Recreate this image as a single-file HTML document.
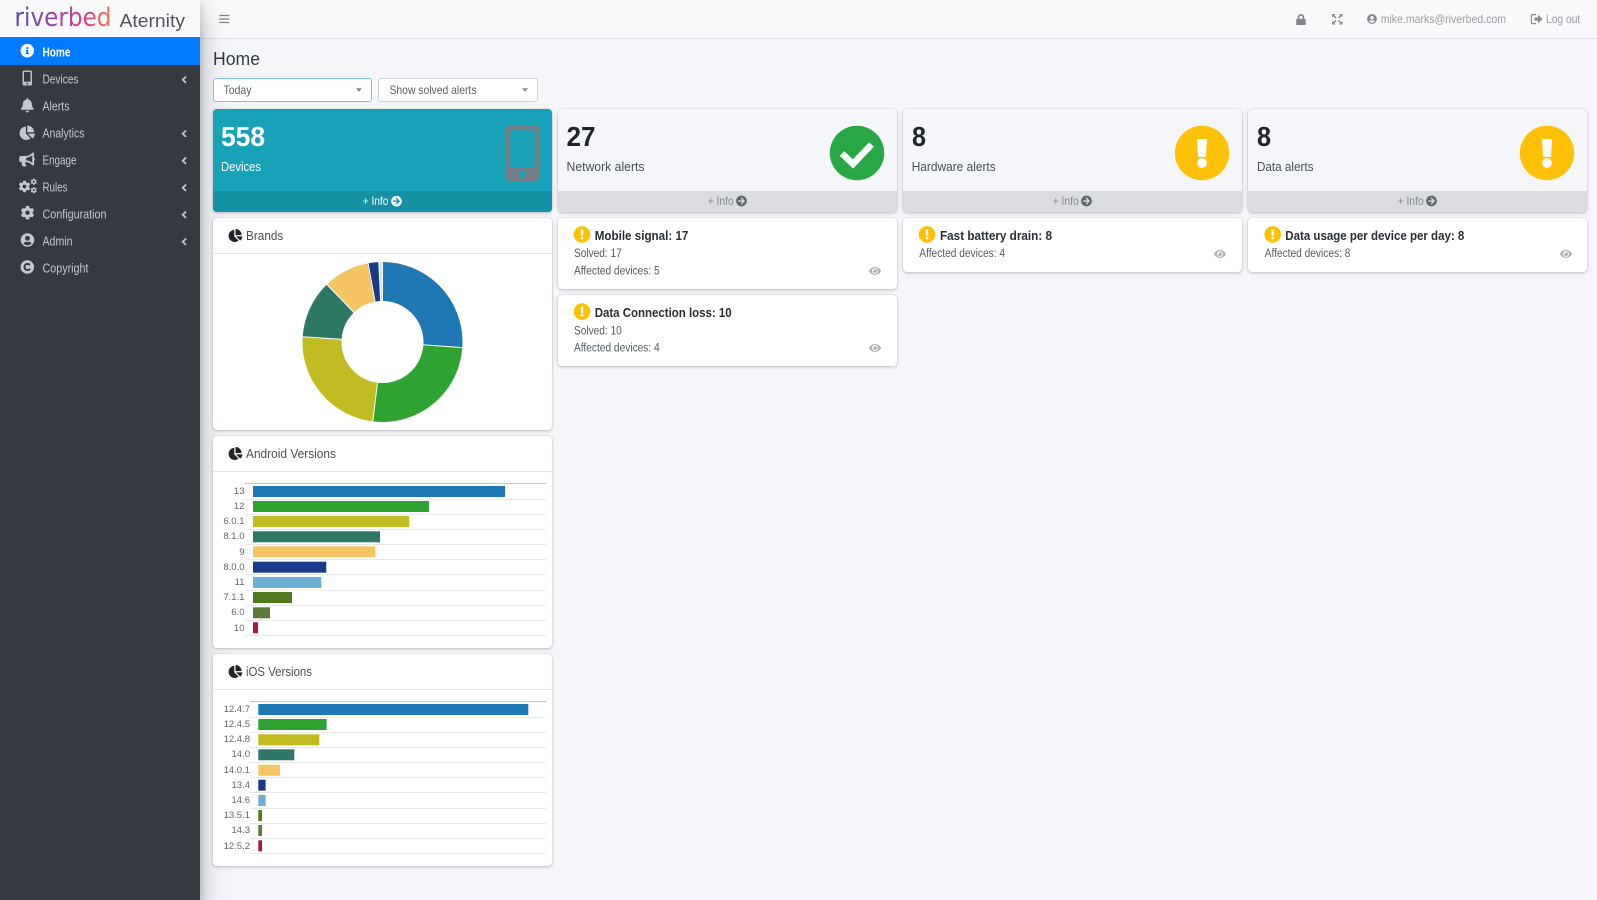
<!DOCTYPE html>
<html lang="en"><head><meta charset="utf-8"><title>Home</title>
<style>
html,body{margin:0;padding:0;width:1597px;height:900px;overflow:hidden;background:#f4f6f9;font-family:"Liberation Sans",sans-serif}
.b{position:absolute;box-sizing:border-box}
.c{border-radius:4px;box-shadow:0 0 1px rgba(0,0,0,.18),0 1px 3px rgba(0,0,0,.22)}
.w{background:#fff}.f{background:#dadce0;border-radius:0 0 4px 4px}
svg.o{position:absolute;left:0;top:0}
text{font-family:"Liberation Sans",sans-serif}
.s{font-size:12.5px;fill:#c2c7d0}
.l{font-size:13px;fill:#4a5056}
.n{font-size:28px;font-weight:700;fill:#212529}
.h{font-size:13px;font-weight:700;fill:#2b2f33}
.p{font-size:11.5px;fill:#555b61}
.g{font-size:12px;fill:#9a9ea3}
.i{font-size:12px;fill:#858a8f}
.a{font-size:9.5px;fill:#666;text-anchor:end}
</style></head><body>
<div class="b" style="left:200px;top:0;width:1397px;height:39px;background:#f8f9fa;border-bottom:1px solid #dee2e6"></div>
<div class="b" style="left:0;top:0;width:200px;height:900px;background:#343a40;box-shadow:0 14px 28px rgba(0,0,0,.25),0 4px 10px rgba(0,0,0,.2)"></div>
<div class="b" style="left:0;top:0;width:200px;height:37px;background:#f8f9fa"></div>
<div class="b" style="left:0;top:37px;width:200px;height:28px;background:#007bff"></div>
<div class="b" style="left:213px;top:78px;width:159px;height:24px;background:#fff;border:1px solid #80bdff;border-radius:3px"></div>
<div class="b" style="left:378px;top:78px;width:160px;height:24px;background:#fff;border:1px solid #ced4da;border-radius:3px"></div>
<div class="b c" style="left:213px;top:109px;width:339px;height:103px;background:#17a2b8"></div>
<div class="b" style="left:213px;top:191px;width:339px;height:21px;background:#1591a5;border-radius:0 0 4px 4px"></div>
<div class="b c" style="left:558px;top:109px;width:339px;height:103px"></div><div class="b f" style="left:558px;top:191px;width:339px;height:21px"></div>
<div class="b c" style="left:903px;top:109px;width:339px;height:103px"></div><div class="b f" style="left:903px;top:191px;width:339px;height:21px"></div>
<div class="b c" style="left:1248px;top:109px;width:339px;height:103px"></div><div class="b f" style="left:1248px;top:191px;width:339px;height:21px"></div>
<div class="b c w" style="left:558px;top:218px;width:339px;height:71px"></div>
<div class="b c w" style="left:558px;top:295px;width:339px;height:71px"></div>
<div class="b c w" style="left:903px;top:218px;width:339px;height:54px"></div>
<div class="b c w" style="left:1248px;top:218px;width:339px;height:54px"></div>
<div class="b c w" style="left:213px;top:218px;width:339px;height:212px"></div>
<div class="b c w" style="left:213px;top:436px;width:339px;height:212px"></div>
<div class="b c w" style="left:213px;top:654px;width:339px;height:212px"></div>
<div class="b" style="left:213px;top:253px;width:339px;height:1px;background:#e3e5e8"></div>
<div class="b" style="left:213px;top:471px;width:339px;height:1px;background:#e3e5e8"></div>
<div class="b" style="left:213px;top:689px;width:339px;height:1px;background:#e3e5e8"></div>

<svg class="o" width="1597" height="900" viewBox="0 0 1597 900" xmlns="http://www.w3.org/2000/svg">
<defs>
<linearGradient id="lg" gradientUnits="userSpaceOnUse" x1="15" y1="0" x2="112" y2="0"><stop offset="0" stop-color="#5b4a9e"/><stop offset=".4" stop-color="#9a48a8"/><stop offset=".72" stop-color="#d8408e"/><stop offset="1" stop-color="#f0814e"/></linearGradient>
<symbol id="info" viewBox="0 0 512 512"><path fill-rule="evenodd" d="M256 8C119.043 8 8 119.083 8 256c0 136.997 111.043 248 248 248s248-111.003 248-248C504 119.083 392.957 8 256 8zm0 110c23.196 0 42 18.804 42 42s-18.804 42-42 42-42-18.804-42-42 18.804-42 42-42zm56 254c0 6.627-5.373 12-12 12h-88c-6.627 0-12-5.373-12-12v-24c0-6.627 5.373-12 12-12h12v-64h-12c-6.627 0-12-5.373-12-12v-24c0-6.627 5.373-12 12-12h64c6.627 0 12 5.373 12 12v100h12c6.627 0 12 5.373 12 12v24z"/></symbol>
<symbol id="mob" viewBox="0 0 320 512"><path fill-rule="evenodd" d="M272 0H48C21.5 0 0 21.5 0 48v416c0 26.5 21.5 48 48 48h224c26.5 0 48-21.5 48-48V48c0-26.5-21.5-48-48-48zM160 480c-17.7 0-32-14.3-32-32s14.3-32 32-32 32 14.3 32 32-14.3 32-32 32zm112-108c0 6.6-5.4 12-12 12H60c-6.6 0-12-5.4-12-12V60c0-6.6 5.4-12 12-12h200c6.6 0 12 5.4 12 12v312z"/></symbol>
<symbol id="bell" viewBox="0 0 448 512"><path d="M224 512c35.32 0 63.97-28.65 63.97-64H160.03c0 35.35 28.65 64 63.97 64zm215.39-149.71c-19.32-20.76-55.47-51.99-55.47-154.29 0-77.7-54.48-139.9-127.94-155.16V32c0-17.67-14.32-32-31.98-32s-31.98 14.33-31.98 32v20.84C118.56 68.1 64.08 130.3 64.08 208c0 102.3-36.15 133.53-55.47 154.29-6 6.45-8.66 14.16-8.61 21.71.11 16.4 12.98 32 32.1 32h383.8c19.12 0 32-15.6 32.1-32 .05-7.55-2.61-15.27-8.61-21.71z"/></symbol>
<symbol id="pie" viewBox="0 0 544 512"><path d="M527.79 288H290.5l158.03 158.03c6.04 6.04 15.98 6.53 22.19.68 38.7-36.46 65.32-85.61 73.13-140.86 1.34-9.46-6.51-17.85-16.06-17.85zm-15.83-64.8C503.72 103.74 408.26 8.28 288.8.04 279.68-.59 272 7.1 272 16.24V240h223.77c9.14 0 16.82-7.68 16.19-16.8zM224 288V50.71c0-9.55-8.39-17.4-17.84-16.06C86.99 51.49-4.1 155.6.14 280.37 4.5 408.51 114.83 513.59 243.03 511.98c50.4-.63 96.97-16.87 135.26-44.03 7.9-5.6 8.42-17.23 1.57-24.08L224 288z"/></symbol>
<symbol id="horn" viewBox="0 0 576 512"><path fill-rule="evenodd" d="M576 240c0-23.63-12.95-44.04-32-55.12V32.01C544 23.26 537.02 0 512 0c-7.12 0-14.19 2.38-19.98 7.02l-85.03 68.03C364.28 109.19 310.66 128 256 128H64c-35.35 0-64 28.65-64 64v96c0 35.35 28.65 64 64 64h33.7c-1.39 10.48-2.18 21.14-2.18 32 0 39.77 9.26 77.35 25.56 110.94 5.19 10.69 16.52 17.06 28.4 17.06h74.28c26.05 0 41.69-29.84 25.9-50.56-16.4-21.52-26.15-48.36-26.15-77.44 0-11.11 1.62-21.79 4.41-32H256c54.66 0 108.28 18.81 150.98 52.95l85.03 68.03a32.023 32.023 0 0 0 19.98 7.02c24.92 0 32-22.78 32-32V295.13C563.05 284.04 576 263.63 576 240zm-96 141.42l-33.05-26.44C392.95 311.78 325.12 288 256 288v-96c69.12 0 136.95-23.78 190.95-66.98L480 98.58v282.84z"/></symbol>
<symbol id="cog" viewBox="0 0 512 512"><path fill-rule="evenodd" d="M487.4 315.7l-42.6-24.6c4.3-23.2 4.3-47 0-70.2l42.6-24.6c4.9-2.8 7.1-8.6 5.5-14-11.1-35.6-30-67.8-54.7-94.6-3.8-4.1-10-5.1-14.8-2.3L380.8 110c-17.9-15.4-38.5-27.3-60.8-35.1V25.8c0-5.6-3.9-10.5-9.4-11.7-36.7-8.2-74.3-7.8-109.2 0-5.5 1.2-9.4 6.1-9.4 11.7V75c-22.2 7.9-42.8 19.8-60.8 35.1L88.7 85.5c-4.9-2.8-11-1.9-14.8 2.3-24.7 26.7-43.6 58.9-54.7 94.6-1.7 5.4.6 11.2 5.5 14L67.3 221c-4.3 23.2-4.3 47 0 70.2l-42.6 24.6c-4.9 2.8-7.1 8.6-5.5 14 11.1 35.6 30 67.8 54.7 94.6 3.8 4.1 10 5.1 14.8 2.3l42.6-24.6c17.9 15.4 38.5 27.3 60.8 35.1v49.2c0 5.6 3.9 10.5 9.4 11.7 36.7 8.2 74.3 7.8 109.2 0 5.5-1.2 9.4-6.1 9.4-11.7v-49.2c22.2-7.9 42.8-19.8 60.8-35.1l42.6 24.6c4.9 2.8 11 1.9 14.8-2.3 24.7-26.7 43.6-58.9 54.7-94.6 1.5-5.5-.7-11.3-5.6-14.1zM256 336c-44.1 0-80-35.9-80-80s35.9-80 80-80 80 35.9 80 80-35.9 80-80 80z"/></symbol>
<symbol id="usr" viewBox="0 0 496 512"><path fill-rule="evenodd" d="M248 8C111 8 0 119 0 256s111 248 248 248 248-111 248-248S385 8 248 8zm0 96c48.6 0 88 39.4 88 88s-39.4 88-88 88-88-39.4-88-88 39.4-88 88-88zm0 344c-58.7 0-111.3-26.6-146.5-68.2 18.8-35.4 55.6-59.8 98.5-59.8 2.4 0 4.8.4 7.1 1.1 13 4.2 26.6 6.9 40.9 6.9 14.3 0 28-2.7 40.9-6.9 2.3-.7 4.7-1.1 7.1-1.1 42.9 0 79.7 24.4 98.5 59.8C359.3 421.4 306.7 448 248 448z"/></symbol>
<symbol id="copy" viewBox="0 0 512 512"><path fill-rule="evenodd" d="M256 8C119.033 8 8 119.033 8 256s111.033 248 248 248 248-111.033 248-248S392.967 8 256 8zm117.134 346.753c-1.592 1.867-39.776 45.731-109.851 45.731-84.692 0-144.484-63.26-144.484-145.567 0-81.303 62.004-143.401 143.762-143.401 66.957 0 101.965 37.315 103.422 38.904a12 12 0 0 1 1.238 14.623l-22.38 34.655c-4.049 6.268-12.774 7.351-18.234 2.295-.233-.216-26.529-24.137-61.88-24.137-46.09 0-73.933 33.552-73.933 76.031 0 39.597 25.476 79.371 74.4 79.371 38.621 0 65.429-28.339 65.674-28.61 5.045-5.472 13.89-5.014 18.318 1.115l24.822 34.57a12 12 0 0 1-.854 14.82z"/></symbol>
<symbol id="lock" viewBox="0 0 448 512"><path fill-rule="evenodd" d="M400 224h-24v-72C376 68.2 307.8 0 224 0S72 68.2 72 152v72H48c-26.5 0-48 21.5-48 48v192c0 26.5 21.5 48 48 48h352c26.5 0 48-21.5 48-48V272c0-26.5-21.5-48-48-48zm-104 0H152v-72c0-39.7 32.3-72 72-72s72 32.3 72 72v72z"/></symbol>
<symbol id="arr" viewBox="0 0 512 512"><path fill-rule="evenodd" d="M256 8c137 0 248 111 248 248S393 504 256 504 8 393 8 256 119 8 256 8zm-28.9 143.6l75.5 72.4H120c-13.3 0-24 10.7-24 24v16c0 13.3 10.7 24 24 24h182.6l-75.5 72.4c-9.7 9.3-9.9 24.8-.4 34.3l11 10.9c9.4 9.4 24.6 9.4 33.9 0L404.3 273c9.4-9.4 9.4-24.6 0-33.9L271.6 106.3c-9.4-9.4-24.6-9.4-33.9 0l-11 10.9c-9.5 9.6-9.3 25.1.4 34.4z"/></symbol>
<symbol id="eye" viewBox="0 0 576 512"><path fill-rule="evenodd" d="M572.52 241.4C518.29 135.59 410.93 64 288 64S57.68 135.64 3.48 241.41a32.35 32.35 0 0 0 0 29.19C57.71 376.41 165.07 448 288 448s230.32-71.64 284.52-177.41a32.35 32.35 0 0 0 0-29.19zM288 400a144 144 0 1 1 144-144 143.93 143.93 0 0 1-144 144zm0-240a95.31 95.31 0 0 0-25.31 3.79 47.85 47.85 0 0 1-66.9 66.9A95.78 95.78 0 1 0 288 160z"/></symbol>
<g id="wb"><circle cx="0" cy="0" r="8.3" fill="#ffc107"/><rect x="-1.2" y="-5" width="2.4" height="6.4" rx="1" fill="#fff"/><circle cx="0" cy="3.6" r="1.4" fill="#fff"/></g>
</defs>

<!-- logo -->
<text x="14.5" y="26" font-size="26" fill="url(#lg)" style="font-family:'DejaVu Sans',sans-serif" textLength="97" lengthAdjust="spacingAndGlyphs">riverbed</text>
<text x="119.5" y="27" font-size="18.5" fill="#55565c" textLength="65.5" lengthAdjust="spacingAndGlyphs">Aternity</text>

<!-- sidebar -->
<g fill="#fff"><use href="#info" x="20.3" y="43.7" width="14" height="14"/></g>
<text class="s" x="42.5" y="56.5" style="fill:#fff;font-weight:700" textLength="28" lengthAdjust="spacingAndGlyphs">Home</text>
<g fill="#c2c7d0">
<use href="#mob" x="22.5" y="70.5" width="9.5" height="15"/>
<use href="#bell" x="20.8" y="98" width="13" height="14.5"/>
<use href="#pie" x="19.5" y="125.5" width="15.5" height="14.5"/>
<use href="#horn" x="19" y="152.5" width="16" height="14"/>
<use href="#cog" x="18.5" y="180.5" width="12" height="12"/>
<use href="#cog" x="30.5" y="178.5" width="6.5" height="6.5"/>
<use href="#cog" x="30.5" y="187" width="6.5" height="6.5"/>
<use href="#cog" x="20.5" y="205.7" width="14" height="14"/>
<use href="#usr" x="20.5" y="233" width="14" height="14"/>
<use href="#copy" x="20.3" y="260" width="14" height="14"/>
</g>
<text class="s" x="42.5" y="83.5" textLength="36" lengthAdjust="spacingAndGlyphs">Devices</text>
<text class="s" x="42.5" y="110.5" textLength="27" lengthAdjust="spacingAndGlyphs">Alerts</text>
<text class="s" x="42.5" y="137.5" textLength="42" lengthAdjust="spacingAndGlyphs">Analytics</text>
<text class="s" x="42.5" y="164.5" textLength="34" lengthAdjust="spacingAndGlyphs">Engage</text>
<text class="s" x="42.5" y="191.5" textLength="25" lengthAdjust="spacingAndGlyphs">Rules</text>
<text class="s" x="42.5" y="218.5" textLength="64" lengthAdjust="spacingAndGlyphs">Configuration</text>
<text class="s" x="42.5" y="245.5" textLength="30" lengthAdjust="spacingAndGlyphs">Admin</text>
<text class="s" x="42.5" y="272.5" textLength="46" lengthAdjust="spacingAndGlyphs">Copyright</text>
<g fill="none" stroke="#c2c7d0" stroke-width="1.8">
<path d="M186 76.5l-3.2 3.2 3.2 3.2"/><path d="M186 130.5l-3.2 3.2 3.2 3.2"/><path d="M186 157.5l-3.2 3.2 3.2 3.2"/><path d="M186 184.5l-3.2 3.2 3.2 3.2"/><path d="M186 211.5l-3.2 3.2 3.2 3.2"/><path d="M186 238.5l-3.2 3.2 3.2 3.2"/>
</g>

<!-- top bar -->
<g stroke="#80858a" stroke-width="1.2"><path d="M219.3 15.5H229.3M219.3 19H229.3M219.3 22.5H229.3"/></g>
<g fill="#85898e"><use href="#lock" x="1296" y="14" width="10" height="11"/></g>
<g fill="none" stroke="#85898e" stroke-width="1.5"><path d="M1333 15l3 3M1341.5 15l-3 3M1333 23.5l3-3M1341.5 23.5l-3-3"/></g>
<g fill="#85898e"><path d="M1332 14h3.5l-3.5 3.5zM1342.5 14h-3.5l3.5 3.5zM1332 24.5h3.5l-3.5-3.5zM1342.5 24.5h-3.5l3.5-3.5z"/><use href="#usr" x="1367" y="14" width="10" height="10"/></g>
<text class="g" x="1380.7" y="23" textLength="125.3" lengthAdjust="spacingAndGlyphs">mike.marks@riverbed.com</text>
<path d="M1536 14.6h-3.3a1.3 1.3 0 0 0-1.3 1.3v6.4a1.3 1.3 0 0 0 1.3 1.3h3.3" fill="none" stroke="#85898e" stroke-width="1.2"/>
<path d="M1534.5 17.6h3.5v-2.8l4.5 4.3-4.5 4.3v-2.8h-3.5z" fill="#85898e"/>
<text class="g" x="1546" y="23" textLength="34.3" lengthAdjust="spacingAndGlyphs">Log out</text>

<!-- heading + selects -->
<text x="213" y="65" font-size="18.5" fill="#343a40" textLength="47" lengthAdjust="spacingAndGlyphs">Home</text>
<text x="223.5" y="94" font-size="12" fill="#5a6168" textLength="28" lengthAdjust="spacingAndGlyphs">Today</text>
<text x="389.5" y="94" font-size="12" fill="#5a6168" textLength="87" lengthAdjust="spacingAndGlyphs">Show solved alerts</text>
<path d="M356 88.3h6l-3 3.6z" fill="#888"/><path d="M522 88.3h6l-3 3.6z" fill="#888"/>

<!-- stat cards -->
<text class="n" x="221" y="146" style="fill:#fff" textLength="44" lengthAdjust="spacingAndGlyphs">558</text>
<text class="l" x="221" y="171" style="fill:#fff" textLength="40" lengthAdjust="spacingAndGlyphs">Devices</text>
<g fill="#757d85"><use href="#mob" x="505" y="125" width="35" height="56"/></g>
<text class="i" x="362.7" y="205" style="fill:#fff" textLength="25.7" lengthAdjust="spacingAndGlyphs">+ Info</text>
<g fill="#fff"><use href="#arr" x="391" y="195.7" width="11" height="11"/></g>

<text class="n" x="566.5" y="146" textLength="29" lengthAdjust="spacingAndGlyphs">27</text>
<text class="l" x="566.5" y="171" textLength="78" lengthAdjust="spacingAndGlyphs">Network alerts</text>
<circle cx="857" cy="153" r="27.2" fill="#28a745"/>
<path d="M842 153.5l11 10.5 18.5-19.5" fill="none" stroke="#fff" stroke-width="6.5"/>
<text class="i" x="707.7" y="205" textLength="26" lengthAdjust="spacingAndGlyphs">+ Info</text>
<g fill="#5f666d"><use href="#arr" x="736" y="195.5" width="11" height="11"/></g>

<text class="n" x="912" y="146" textLength="14" lengthAdjust="spacingAndGlyphs">8</text>
<text class="l" x="911.7" y="171" textLength="84" lengthAdjust="spacingAndGlyphs">Hardware alerts</text>
<circle cx="1202" cy="153" r="27.2" fill="#ffc107"/>
<path d="M1197 139h10l-1 18h-8z" fill="#fff"/><circle cx="1202" cy="163" r="4.9" fill="#fff"/>
<text class="i" x="1052.7" y="205" textLength="26" lengthAdjust="spacingAndGlyphs">+ Info</text>
<g fill="#5f666d"><use href="#arr" x="1081" y="195.5" width="11" height="11"/></g>

<text class="n" x="1257" y="146" textLength="14" lengthAdjust="spacingAndGlyphs">8</text>
<text class="l" x="1257" y="171" textLength="56.5" lengthAdjust="spacingAndGlyphs">Data alerts</text>
<circle cx="1547" cy="153" r="27.2" fill="#ffc107"/>
<path d="M1542 139h10l-1 18h-8z" fill="#fff"/><circle cx="1547" cy="163" r="4.9" fill="#fff"/>
<text class="i" x="1397.7" y="205" textLength="26" lengthAdjust="spacingAndGlyphs">+ Info</text>
<g fill="#5f666d"><use href="#arr" x="1426" y="195.5" width="11" height="11"/></g>

<!-- alert cards -->
<use href="#wb" x="582" y="234.4"/>
<text class="h" x="594.7" y="240" textLength="93.7" lengthAdjust="spacingAndGlyphs">Mobile signal: 17</text>
<text class="p" x="574" y="257" textLength="47.7" lengthAdjust="spacingAndGlyphs">Solved: 17</text>
<text class="p" x="574" y="274.4" textLength="85.7" lengthAdjust="spacingAndGlyphs">Affected devices: 5</text>
<g fill="#aeb2b6"><use href="#eye" x="869" y="265" width="12" height="12"/><use href="#eye" x="869" y="342" width="12" height="12"/><use href="#eye" x="1214" y="248" width="12" height="12"/><use href="#eye" x="1560" y="248" width="12" height="12"/></g>
<use href="#wb" x="582" y="311.6"/>
<text class="h" x="594.7" y="317" textLength="137" lengthAdjust="spacingAndGlyphs">Data Connection loss: 10</text>
<text class="p" x="574" y="334.3" textLength="47.7" lengthAdjust="spacingAndGlyphs">Solved: 10</text>
<text class="p" x="574" y="351.3" textLength="85.7" lengthAdjust="spacingAndGlyphs">Affected devices: 4</text>
<use href="#wb" x="927" y="234.4"/>
<text class="h" x="940" y="240" textLength="112" lengthAdjust="spacingAndGlyphs">Fast battery drain: 8</text>
<text class="p" x="919.3" y="257" textLength="85.7" lengthAdjust="spacingAndGlyphs">Affected devices: 4</text>
<use href="#wb" x="1272.7" y="234.4"/>
<text class="h" x="1285.3" y="240" textLength="179" lengthAdjust="spacingAndGlyphs">Data usage per device per day: 8</text>
<text class="p" x="1264.7" y="257" textLength="85.7" lengthAdjust="spacingAndGlyphs">Affected devices: 8</text>

<!-- chart headers -->
<g fill="#212529"><use href="#pie" x="228.5" y="229" width="14" height="13"/><use href="#pie" x="228.5" y="447" width="14" height="13"/><use href="#pie" x="228.5" y="665" width="14" height="13"/></g>
<text class="l" x="246" y="240" textLength="37.3" lengthAdjust="spacingAndGlyphs">Brands</text>
<text class="l" x="246" y="458" textLength="90" lengthAdjust="spacingAndGlyphs">Android Versions</text>
<text class="l" x="246" y="676" textLength="66" lengthAdjust="spacingAndGlyphs">iOS Versions</text>

<!-- donut -->
<g fill="none" stroke-width="39">
<circle cx="382.5" cy="342" r="60.5" pathLength="360" stroke="#1f77b4" stroke-dasharray="94 266" transform="rotate(-90 382.5 342)"/>
<circle cx="382.5" cy="342" r="60.5" pathLength="360" stroke="#2ea32f" stroke-dasharray="93 267" transform="rotate(4 382.5 342)"/>
<circle cx="382.5" cy="342" r="60.5" pathLength="360" stroke="#c0bc22" stroke-dasharray="86.8 273.2" transform="rotate(97 382.5 342)"/>
<circle cx="382.5" cy="342" r="60.5" pathLength="360" stroke="#2e7866" stroke-dasharray="42.2 317.8" transform="rotate(183.8 382.5 342)"/>
<circle cx="382.5" cy="342" r="60.5" pathLength="360" stroke="#f4c562" stroke-dasharray="33.6 326.4" transform="rotate(226 382.5 342)"/>
<circle cx="382.5" cy="342" r="60.5" pathLength="360" stroke="#193a8a" stroke-dasharray="7.8 352.2" transform="rotate(259.6 382.5 342)"/>
<circle cx="382.5" cy="342" r="60.5" pathLength="360" stroke="#cfe0f2" stroke-dasharray="2.6 357.4" transform="rotate(267.4 382.5 342)"/>
</g>
<g stroke="#fff" stroke-width="1">
<line x1="382.5" y1="260" x2="382.5" y2="302" transform="rotate(0 382.5 342)"/>
<line x1="382.5" y1="260" x2="382.5" y2="302" transform="rotate(94 382.5 342)"/>
<line x1="382.5" y1="260" x2="382.5" y2="302" transform="rotate(187 382.5 342)"/>
<line x1="382.5" y1="260" x2="382.5" y2="302" transform="rotate(273.8 382.5 342)"/>
<line x1="382.5" y1="260" x2="382.5" y2="302" transform="rotate(316 382.5 342)"/>
<line x1="382.5" y1="260" x2="382.5" y2="302" transform="rotate(349.6 382.5 342)"/>
<line x1="382.5" y1="260" x2="382.5" y2="302" transform="rotate(357.4 382.5 342)"/>
</g>

<!-- android -->
<g stroke="#e9e9e9" stroke-width="1">
<path d="M245 499.5H546M245 514.5H546M245 529.5H546M245 544.5H546M245 559.5H546M245 574.5H546M245 590.5H546M245 605.5H546M245 620.5H546M245 635.5H546"/>
</g>
<path d="M245 483.5H546" stroke="#c4c6c8" stroke-width="1"/>
<rect x="253" y="486" width="252" height="11" fill="#1f77b4"/>
<rect x="253" y="501" width="176" height="11" fill="#2ea32f"/>
<rect x="253" y="516" width="156.3" height="11" fill="#c0bc22"/>
<rect x="253" y="531.3" width="127" height="11" fill="#2e7866"/>
<rect x="253" y="546.3" width="122.3" height="11" fill="#f4c562"/>
<rect x="253" y="561.7" width="73.3" height="11" fill="#193a8a"/>
<rect x="253" y="577" width="68.3" height="11" fill="#6baed6"/>
<rect x="253" y="592" width="39" height="11" fill="#4f7a1f"/>
<rect x="253" y="607.3" width="17" height="11" fill="#5a7a3c"/>
<rect x="253" y="622.3" width="5" height="11" fill="#a6174f"/>
<text class="a" x="244.5" y="493.8">13</text><text class="a" x="244.5" y="509">12</text><text class="a" x="244.5" y="524.2">6.0.1</text><text class="a" x="244.5" y="539.2">8.1.0</text><text class="a" x="244.5" y="554.8">9</text><text class="a" x="244.5" y="570.2">8.0.0</text><text class="a" x="244.5" y="585.2">11</text><text class="a" x="244.5" y="600.2">7.1.1</text><text class="a" x="244.5" y="615.2">6.0</text><text class="a" x="244.5" y="631.2">10</text>

<!-- ios -->
<g stroke="#e9e9e9" stroke-width="1">
<path d="M250 717.5H546M250 732.5H546M250 747.5H546M250 762.5H546M250 777.5H546M250 792.5H546M250 808.5H546M250 823.5H546M250 838.5H546M250 853.5H546"/>
</g>
<path d="M250 701.5H546" stroke="#c4c6c8" stroke-width="1"/>
<rect x="258.3" y="704" width="270" height="11" fill="#1f77b4"/>
<rect x="258.3" y="719" width="68.3" height="11" fill="#2ea32f"/>
<rect x="258.3" y="734.3" width="61" height="11" fill="#c0bc22"/>
<rect x="258.3" y="749.3" width="36" height="11" fill="#2e7866"/>
<rect x="258.3" y="764.7" width="21.7" height="11" fill="#f4c562"/>
<rect x="258.3" y="779.7" width="7.3" height="11" fill="#193a8a"/>
<rect x="258.3" y="795" width="7.3" height="11" fill="#6baed6"/>
<rect x="258.3" y="810" width="3.7" height="11" fill="#4f7a1f"/>
<rect x="258.3" y="825" width="3.7" height="11" fill="#5a7a3c"/>
<rect x="258.3" y="840.3" width="3.7" height="11" fill="#a6174f"/>
<text class="a" x="250" y="712.2">12.4.7</text><text class="a" x="250" y="727.2">12.4.5</text><text class="a" x="250" y="742.2">12.4.8</text><text class="a" x="250" y="757.2">14.0</text><text class="a" x="250" y="772.8">14.0.1</text><text class="a" x="250" y="787.8">13.4</text><text class="a" x="250" y="803.2">14.6</text><text class="a" x="250" y="818.2">13.5.1</text><text class="a" x="250" y="833.2">14.3</text><text class="a" x="250" y="848.8">12.5.2</text>
</svg>
</body></html>
